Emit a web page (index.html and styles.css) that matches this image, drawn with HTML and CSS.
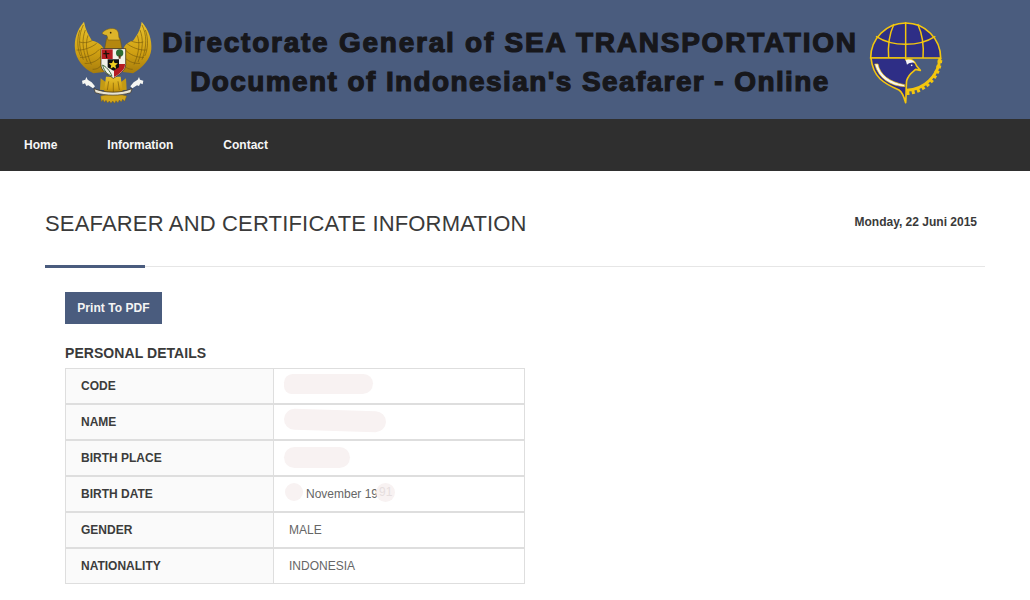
FILE: index.html
```html
<!DOCTYPE html>
<html lang="en">
<head>
<meta charset="utf-8">
<title>Seafarer and Certificate Information</title>
<link rel="stylesheet" href="styles.css">
</head>
<body>
<header class="banner">
  <svg class="garuda" viewBox="36 24 240 258" width="80" height="86" aria-hidden="true">
    <defs>
      <linearGradient id="gold" x1="0" y1="0" x2="0" y2="1">
        <stop offset="0" stop-color="#e8c22e"/><stop offset=".6" stop-color="#d0a012"/><stop offset="1" stop-color="#a67c0c"/>
      </linearGradient>
    </defs>
    <path d="M72 35C50 60 42 90 45 118c3 30 25 58 55 72l32-4-2-72c-8-14-22-20-34-22C86 76 76 58 72 35z" fill="url(#gold)"/>
    <path d="M245 35c22 25 31 55 29 83-3 30-25 55-55 72l-30-4 2-72c6-14 18-20 28-22 12-16 23-34 26-57z" fill="url(#gold)"/>
    <g fill="none" stroke="#7c5d0c" stroke-width="2">
      <path d="M70 45c-14 28-16 62 0 104M76 60c-10 26-10 56 6 96M84 76c-8 24-6 50 10 88M60 60c-10 24-8 60 2 78"/>
      <path d="M96 92c-12 6-26 8-38 4M110 100c-14 12-40 22-60 20M118 118c-14 16-38 26-58 24M124 138c-10 14-30 24-50 22M128 160c-6 10-14 18-30 18"/>
      <path d="M246 45c14 28 16 62 0 104M240 60c10 26 10 56-6 96M232 76c8 24 6 50-10 88M256 60c10 24 8 60-2 78"/>
      <path d="M212 92c12 6 26 8 38 4M200 100c14 12 40 22 60 20M194 118c14 16 38 26 58 24M190 138c10 14 30 24 50 22M188 160c6 10 14 18 30 18"/>
    </g>
    <path d="M140 84h40l6 32h-52z" fill="#b5870f" stroke="#6f5510" stroke-width="1.500"/>
    <path d="M126 70c6-10 22-16 36-14 10 2 14 10 14 20 0 6 2 10 4 14h-36c-2-8-2-12-4-14-6 0-10-2-14-6z" fill="#dcb42a" stroke="#6f5510" stroke-width="1.500"/>
    <circle cx="152" cy="68" r="2.500" fill="#3a2a08"/>
    <path d="M122 205l16 12-4 24-14-2zM198 205l-16 12 4 24 14-2z" fill="#c39a14"/>
    <path d="M138 200h44l6 44-28 12-28-12z" fill="url(#gold)"/>
    <path d="M146 214l-4 26M160 218v28M174 214l4 26" stroke="#7c5d0c" stroke-width="2" fill="none"/>
    <path d="M122 258l42-8 36 8-6 16-6-6-4 8-6-6-4 8-6-6-4 8-6-7-5 7-5-7-5 6-5-8-5 6-4-8-5 6z" fill="#d2a51a" stroke="#7c5d0c" stroke-width="1.200"/>
    <path d="M123 116h74v48c0 18-20 30-37 41-17-11-37-23-37-41z" fill="#f2f2ea" stroke="#2a1a0c" stroke-width="2"/>
    <path d="M125 118h33v29h-33z" fill="#b51c22"/>
    <path d="M162 162h33v2c0 16-18 28-33 37z" fill="#b51c22"/>
    <path d="M137 122l3 22M130 131h18" stroke="#1c1208" stroke-width="4"/>
    <circle cx="179" cy="129" r="11" fill="#2d6d34"/>
    <path d="M176 136h6v10h-6z" fill="#5b3a17"/>
    <path d="M128 165c8 4 22 16 28 34-12-6-24-14-28-34z" fill="#f2f2ea" stroke="#3c6b3c" stroke-width="3"/>
    <path d="M143 148h34v24l-17 10-17-10z" fill="#111"/>
    <path d="M160 150l3.800 9.200 9.900.8-7.500 6.500 2.300 9.700-8.500-5.200-8.500 5.200 2.300-9.700-7.500-6.500 9.900-.8z" fill="#f0d020"/>
    <path d="M66 212l10-3 3-8 4 8 12 8 10 12-6 6-14-9-6 2-4-8-7 3z" fill="#f6f6f2"/>
    <path d="M250 212l-10-3-3-8-4 8-12 8-10 12 6 6 14-9 6 2 4-8 7 3z" fill="#f6f6f2"/>
    <path d="M102 236c34 14 80 14 114 0l-4 12c-32 10-74 10-106 0z" fill="#e8e4d4" stroke="#3a2c14" stroke-width="2"/>
  </svg>
  <div class="banner-title">
    <p class="title-wide">Directorate General of SEA TRANSPORTATION</p>
    <p>Document of Indonesian's Seafarer - Online</p>
  </div>
  <svg class="dephub" viewBox="54 30 228 264" width="76" height="88" aria-hidden="true">
    <path d="M270 156A108 108 0 0 1 170 254" fill="none" stroke="#f3c60e" stroke-width="14" stroke-dasharray="9 7"/>
    <path d="M270 150A105 105 0 0 1 170 247" fill="none" stroke="#f3c60e" stroke-width="9"/>
    <path d="M62 150A105 105 0 0 1 272 150z" fill="#2e2e86" stroke="#f3c60e" stroke-width="5"/>
    <g fill="none" stroke="#f3c60e" stroke-width="4.500">
      <path d="M167 42v108M132 48c-14 30-19 66-16 102M203 48c14 30 19 66 16 102"/>
      <path d="M78 85c50 32 128 32 178 0"/>
    </g>
    <path d="M63 150H166c2 4 2 5 2 6 16-6 28 6 32 18l11 13-14-3c-6 6-22 14-27 34-2 14-1 40-3 66-4-14-10-32-20-38-46-20-78-38-84-96z" fill="#2e2e86" stroke="#f3c60e" stroke-width="5" stroke-linejoin="round"/>
    <path d="M84 168c6 32 34 54 80 62l0 6c-42-2-78-24-90-68z" fill="#f6f6f6" stroke="#f3c60e" stroke-width="2"/>
    <path d="M167 156c10-4 22 0 28 8-8-2-18 0-24 6z" fill="#f6f6f6"/>
    <circle cx="185" cy="172" r="2.500" fill="#f6f6f6"/>
  </svg>
</header>
<nav class="menu">
  <a class="menu-item" href="#">Home</a>
  <a class="menu-item" href="#">Information</a>
  <a class="menu-item" href="#">Contact</a>
</nav>
<main class="page">
  <div class="title-row">
    <h1 class="page-title">SEAFARER AND CERTIFICATE INFORMATION</h1>
    <span class="page-date">Monday, 22 Juni 2015</span>
  </div>
  <div class="rule"><span class="rule-accent"></span></div>
  <div class="content">
    <a class="pdf-button" href="#">Print To PDF</a>
    <h2 class="section-title">PERSONAL DETAILS</h2>
    <table class="details">
      <tr><th>CODE</th><td><span class="redact redact-code"></span></td></tr>
      <tr><th>NAME</th><td><span class="redact redact-name"></span></td></tr>
      <tr><th>BIRTH PLACE</th><td><span class="redact redact-place"></span></td></tr>
      <tr><th>BIRTH DATE</th><td class="date-cell"><span class="redact redact-day"></span><span class="date-text">November 19<span class="fade">91</span></span></td></tr>
      <tr><th>GENDER</th><td>MALE</td></tr>
      <tr><th>NATIONALITY</th><td>INDONESIA</td></tr>
    </table>
  </div>
</main>
</body>
</html>
```

FILE: styles.css
```css
* { box-sizing: border-box; }
html, body { margin: 0; height: 600px; overflow: hidden; }
body { background: #fff; font-family: "Liberation Sans", Arial, sans-serif; color: #333; }

.banner {
  height: 119px;
  background: #4a5c7e;
  display: flex;
  align-items: flex-start;
  padding-left: 72px;
}
.garuda { margin-top: 18px; flex: none; }
.dephub { margin-top: 18px; margin-left: 6px; flex: none; }
.banner-title {
  width: 704px;
  margin-left: 6px;
  padding-top: 23px;
  text-align: center;
  color: #17171b;
  font-weight: 700;
  font-size: 28px;
  line-height: 39px;
  letter-spacing: 1.4px;
  -webkit-text-stroke: 1.2px #17171b;
}
.banner-title p { margin: 0; white-space: nowrap; }
.banner-title .title-wide { letter-spacing: 1.76px; }

.menu {
  height: 52px;
  background: #2f2f2f;
  display: flex;
  align-items: center;
  padding-left: 24px;
  gap: 50px;
}
.menu-item { color: #f6f6f6; font-size: 12px; font-weight: 700; text-decoration: none; }

.page { padding: 0 45px; }
.title-row {
  height: 94px;
  display: flex;
  justify-content: space-between;
  align-items: flex-start;
  padding: 39px 8px 0 0;
}
.page-title { margin: 0; font-size: 22px; line-height: 28px; font-weight: 400; letter-spacing: .17px; color: #3a3a3a; }
.page-date { font-size: 12px; font-weight: 700; line-height: 24px; color: #3a3a3a; }

.rule { height: 1px; background: #e6e6e6; margin-top: 1px; position: relative; }
.rule-accent { position: absolute; left: 0; top: -1px; width: 100px; height: 3px; background: #4a5c7e; }

.content { padding: 25px 0 0 20px; }
.pdf-button {
  display: block;
  width: 97px;
  height: 32px;
  line-height: 32px;
  text-align: center;
  background: #4a5c7e;
  color: #f4f4f4;
  font-size: 12px;
  font-weight: 700;
  letter-spacing: .05px;
  text-decoration: none;
}
.section-title { margin: 21px 0 0; font-size: 14px; line-height: 16px; font-weight: 700; letter-spacing: .06px; color: #3a3a3a; }

.details { margin-top: 7px; width: 460px; border-collapse: collapse; table-layout: fixed; }
.details tr { height: 36px; }
.details tr:first-child { height: 35px; }
.details th, .details td { border: 1px solid #dedede; border-bottom-width: 2px; padding: 0 15px; font-size: 12px; text-align: left; }
.details tr:last-child th, .details tr:last-child td { border-bottom-width: 1px; }
.details th { width: 208px; background: #fafafa; font-weight: 700; color: #3c3c3c; }
.details td { color: #666; }

.redact { display: block; background: #f8f2f2; }
.redact-code { width: 89px; height: 20px; margin: -3px 0 0 -5px; border-radius: 10px 11px 12px 9px; }
.redact-name { width: 102px; height: 21px; margin: -2px 0 0 -5px; border-radius: 11px; transform: rotate(1.6deg); }
.redact-place { width: 66px; height: 21px; margin: -1px 0 0 -5px; border-radius: 11px; }
.date-cell { white-space: nowrap; }
.redact-day { display: inline-block; width: 18px; height: 18px; border-radius: 50%; margin: 0 3px 0 -4px; vertical-align: middle; position: relative; top: -2px; }
.date-text { vertical-align: middle; position: relative; top: 1px; }
.fade { display: inline-block; width: 19px; height: 19px; line-height: 19px; margin-left: -2px; padding-left: 3px; color: #e6dede; background: #f8f2f2; border-radius: 50%; position: relative; top: -2px; }
```
